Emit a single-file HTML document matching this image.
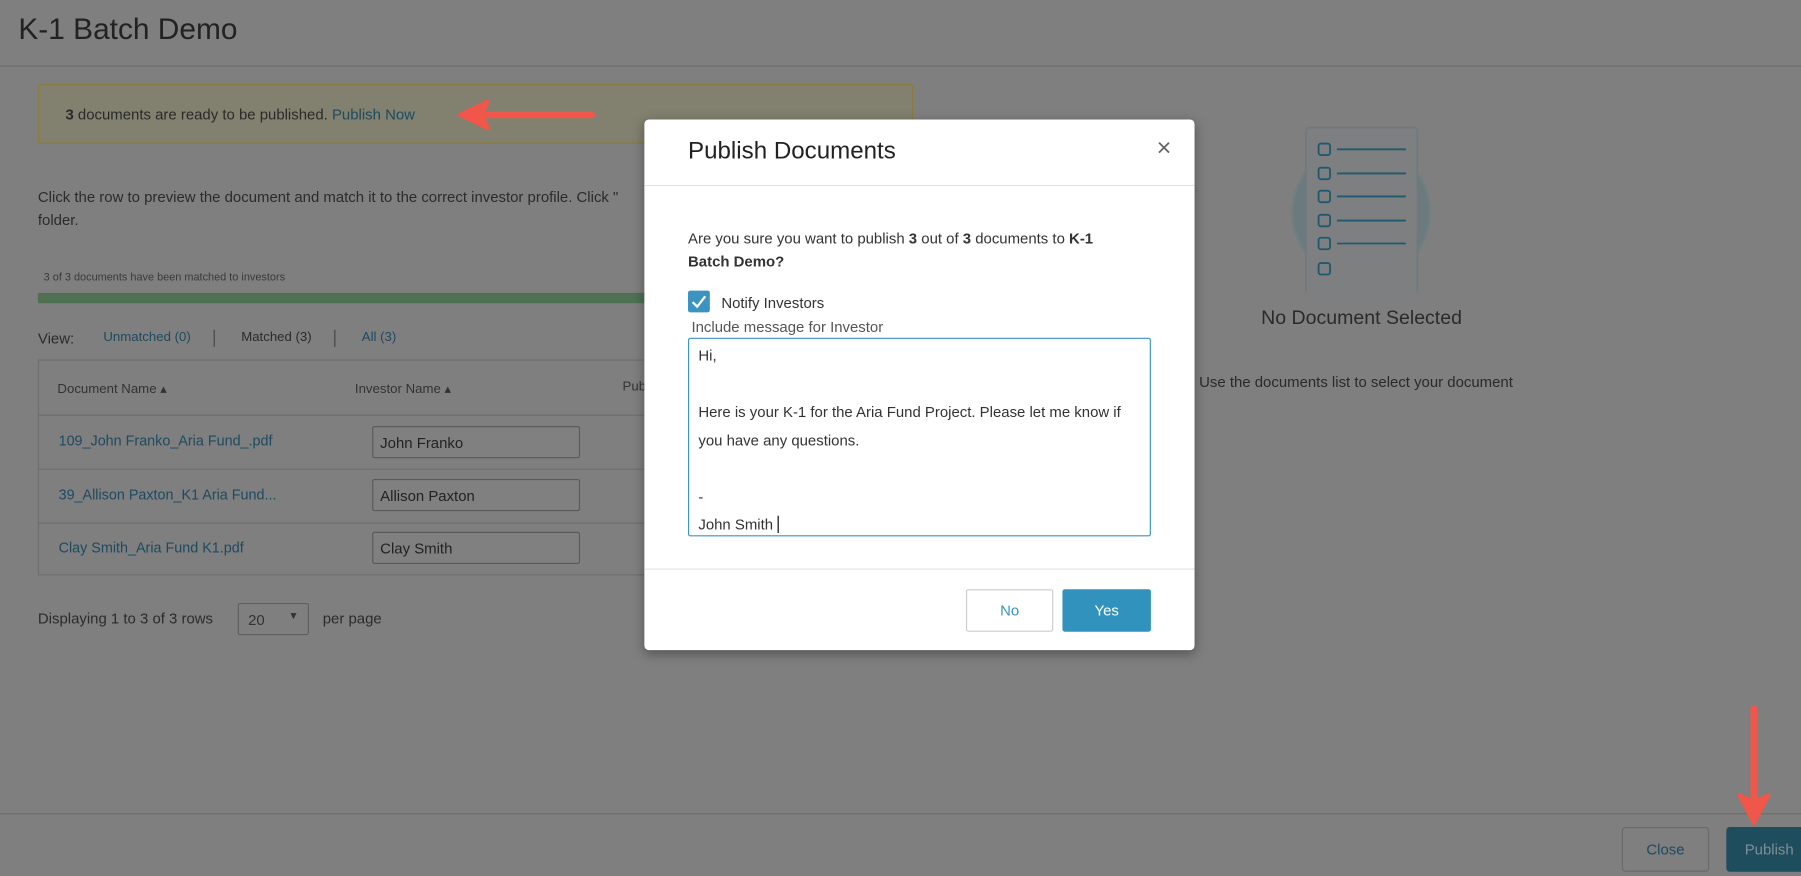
<!DOCTYPE html><html><head><meta charset="utf-8"><style>
*{box-sizing:border-box;margin:0;padding:0}
body{width:1801px;height:876px;overflow:hidden;background:#7f7f7f;font-family:"Liberation Sans",sans-serif}
#w{position:absolute;left:0;top:0;width:1568px;height:763px;transform:scale(1.14860);transform-origin:0 0;color:#2b2b2b}
.a{position:absolute;white-space:nowrap}
.lk{color:#1d4a60}
.inp{position:absolute;left:324px;width:181px;height:28px;border:1px solid #5a5a5a;background:#808080;border-radius:2px;font-size:13px;padding:6px 6px;color:#222}
.row{position:absolute;left:33px;width:540px;border-top:1px solid #6e6e6e}
</style></head><body><div id="w">
<div class="a" style="left:16px;top:10px;font-size:26px;color:#222">K-1 Batch Demo</div>
<div class="a" style="left:0;top:57px;width:1568px;height:1px;background:#6f6f6f"></div>
<div class="a" style="left:33px;top:73px;width:762px;height:52px;background:#82806f;border:1px solid #8a7c3c;border-radius:2px"></div>
<div class="a" style="left:57px;top:92px;font-size:13px;color:#2a2a2a"><b>3</b> documents are ready to be published. <span class="lk">Publish Now</span></div>
<div class="a" style="left:33px;top:162px;font-size:13px;line-height:20px">Click the row to preview the document and match it to the correct investor profile. Click "<br>folder.</div>
<div class="a" style="left:38px;top:236px;font-size:9.5px;color:#3a3a3a">3 of 3 documents have been matched to investors</div>
<div class="a" style="left:33px;top:255px;width:540px;height:9px;background:#4f7052"></div>
<div class="a" style="left:33px;top:287px;font-size:13px">View:</div>
<div class="a lk" style="left:90px;top:288px;font-size:11.5px">Unmatched (0)</div>
<div class="a" style="left:186px;top:287px;width:1px;height:15px;background:#444"></div>
<div class="a" style="left:210px;top:288px;font-size:11.5px">Matched (3)</div>
<div class="a" style="left:291px;top:287px;width:1px;height:15px;background:#444"></div>
<div class="a lk" style="left:315px;top:288px;font-size:11.5px">All (3)</div>
<div class="a" style="left:33px;top:313px;width:540px;height:188px;border:1px solid #6e6e6e"></div>
<div class="a" style="left:50px;top:331px;font-size:11.5px;color:#333">Document Name ▴</div>
<div class="a" style="left:309px;top:331px;font-size:11.5px;color:#333">Investor Name ▴</div>
<div class="a" style="left:542px;top:331px;font-size:11.5px;color:#333">Pub</div>
<div class="row" style="top:361px"></div><div class="row" style="top:408px"></div><div class="row" style="top:455px"></div>
<div class="a lk" style="left:51px;top:377px;font-size:12.5px">109_John Franko_Aria Fund_.pdf</div>
<div class="a lk" style="left:51px;top:424px;font-size:12.5px">39_Allison Paxton_K1 Aria Fund...</div>
<div class="a lk" style="left:51px;top:470px;font-size:12.5px">Clay Smith_Aria Fund K1.pdf</div>
<div class="inp" style="top:371px">John Franko</div>
<div class="inp" style="top:417px">Allison Paxton</div>
<div class="inp" style="top:463px">Clay Smith</div>
<div class="a" style="left:33px;top:531px;font-size:13px">Displaying 1 to 3 of 3 rows</div>
<div class="a" style="left:207px;top:525px;width:62px;height:28px;border:1px solid #5f5f5f;border-radius:2px;font-size:13px;padding:6px 8px;color:#333">20 <span style="position:absolute;right:8px;top:5px;font-size:9px">▼</span></div>
<div class="a" style="left:281px;top:531px;font-size:13px">per page</div>
<svg class="a" style="left:1120px;top:105px" width="135" height="150"><circle cx="65" cy="80" r="60" fill="#6b7b7d" stroke="#737e82" stroke-width="2"/><rect x="17" y="6" width="97" height="150" rx="3" fill="#7d7f80" stroke="#6f7a80" stroke-width="1.5"/>
<g stroke="#1f5a70" stroke-width="1.6" fill="none"><rect x="28" y="20" width="10" height="10" rx="2"/><line x1="44" y1="25" x2="104" y2="25"/><rect x="28" y="41" width="10" height="10" rx="2"/><line x1="44" y1="46" x2="104" y2="46"/><rect x="28" y="61" width="10" height="10" rx="2"/><line x1="44" y1="66" x2="104" y2="66"/><rect x="28" y="82" width="10" height="10" rx="2"/><line x1="44" y1="87" x2="104" y2="87"/><rect x="28" y="102" width="10" height="10" rx="2"/><line x1="44" y1="107" x2="104" y2="107"/><rect x="28" y="124" width="10" height="10" rx="2"/></g></svg>
<div class="a" style="left:1098px;top:267px;font-size:17px;color:#2a2a2a">No Document Selected</div>
<div class="a" style="left:1044px;top:325px;font-size:13px;color:#2a2a2a">Use the documents list to select your document</div>
<div class="a" style="left:0;top:708px;width:1568px;height:1px;background:#6c6c6c"></div>
<div class="a" style="left:1412px;top:720px;width:76px;height:39px;border:1px solid #6a6a6a;border-radius:3px;font-size:13px;color:#1d4a60;text-align:center;line-height:38px">Close</div>
<div class="a" style="left:1503px;top:720px;width:70px;height:39px;background:#1e4d5e;border-radius:3px;font-size:13px;color:#7e8f96;padding-left:16px;line-height:39px">Publish</div>
<svg class="a" style="left:390px;top:85px" width="135" height="32"><path d="M125 15 L30 15" stroke="#f0564a" stroke-width="6" stroke-linecap="round"/><path d="M10 15 L35 3 L30 15 L35 27 Z" fill="#f0564a" stroke="#f0564a" stroke-width="3" stroke-linejoin="round"/></svg>
<svg class="a" style="left:1510px;top:612px" width="34" height="110"><path d="M17 5 L17 85" stroke="#f0564a" stroke-width="6" stroke-linecap="round"/><path d="M17 105 L4 80 L17 86 L30 80 Z" fill="#f0564a" stroke="#f0564a" stroke-width="3" stroke-linejoin="round"/></svg>
<div class="a" style="left:561px;top:104px;width:479px;height:462px;background:#fff;border-radius:4px;box-shadow:0 3px 10px rgba(0,0,0,.35)">
<div class="a" style="left:38px;top:16px;font-size:21px;color:#222">Publish Documents</div>
<div class="a" style="left:446px;top:12px;font-size:22px;color:#666;font-weight:300">×</div>
<div class="a" style="left:0;top:57px;width:479px;height:1px;background:#e3e3e3"></div>
<div class="a" style="left:38px;top:94px;font-size:13px;line-height:20px;color:#333">Are you sure you want to publish <b>3</b> out of <b>3</b> documents to <b>K-1</b><br><b>Batch Demo?</b></div>
<div class="a" style="left:38px;top:149px;width:19px;height:19px;background:#3a93c0;border-radius:2px"><svg width="19" height="19"><path d="M4 10 L8 14 L15 5" stroke="#fff" stroke-width="2" fill="none"/></svg></div>
<div class="a" style="left:67px;top:152px;font-size:13px;color:#333">Notify Investors</div>
<div class="a" style="left:41px;top:173px;font-size:13px;color:#555">Include message for Investor</div>
<div class="a" style="left:38px;top:190px;width:403px;height:173px;border:1px solid #3a93c0;border-radius:2px;font-size:13px;color:#333;line-height:24.5px;padding:3px 8px;white-space:pre">Hi,

Here is your K-1 for the Aria Fund Project. Please let me know if
you have any questions.

-
John Smith <span style="border-left:1px solid #000"></span></div>
<div class="a" style="left:0;top:391px;width:479px;height:1px;background:#e3e3e3"></div>
<div class="a" style="left:280px;top:409px;width:76px;height:37px;border:1px solid #ccc;border-radius:2px;text-align:center;line-height:35px;font-size:13px;color:#3a93c0">No</div>
<div class="a" style="left:364px;top:409px;width:77px;height:37px;background:#3192be;border-radius:2px;text-align:center;line-height:37px;font-size:13px;color:#fff">Yes</div>
</div>
</div></body></html>
